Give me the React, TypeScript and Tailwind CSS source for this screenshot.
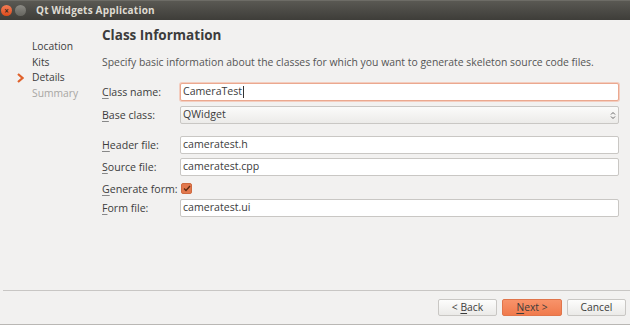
import React from "react";

const font = { fontFamily: '"Open Sans", "DejaVu Sans", sans-serif' };

function Label({ u, rest }: { u: string; rest: string }) {
  return (
    <div className="w-[78px] shrink-0 whitespace-nowrap text-[10.6px] text-[#3c3c3c] leading-none">
      <span className="underline decoration-[#888] underline-offset-2">{u}</span>
      {rest}
    </div>
  );
}

function Field({ value, focused }: { value: string; focused?: boolean }) {
  return (
    <div
      className={
        "flex-1 min-w-0 h-[18px] rounded-[2px] bg-white flex items-center px-[2px] text-[10.6px] text-[#3c3c3c] " +
        (focused ? "border border-[#eba88f] shadow-[0_0_0_1px_#f3cdbf]" : "border border-[#c9c7c4]")
      }
    >
      {value}
      {focused && <span className="w-px h-[12px] bg-[#333] ml-px" />}
    </div>
  );
}

export default function App() {
  return (
    <div className="w-[630px] h-[325px] bg-[#f2f1f0] flex flex-col overflow-hidden" style={font}>
      {/* title bar */}
      <div className="h-[20px] shrink-0 bg-gradient-to-b from-[#5a5953] to-[#3e3d39] border-t border-[#6d6c66] flex items-center">
        <div className="w-[11px] h-[11px] rounded-full bg-gradient-to-b from-[#f37d55] to-[#df4a16] ml-[1px] flex items-center justify-center">
          <span className="text-[8px] leading-none text-[#3c2a20] font-bold">×</span>
        </div>
        <div className="w-[11px] h-[11px] rounded-full bg-gradient-to-b from-[#8c8b85] to-[#66655f] ml-[3px]" />
        <div className="ml-[10px] text-[10px] font-bold text-[#dfdbd2] tracking-[0.2px]">Qt Widgets Application</div>
      </div>

      <div className="flex flex-1 min-h-0">
        {/* sidebar */}
        <div className="w-[102px] shrink-0 pt-[19px] text-[10.3px] text-[#3c3c3c]">
          <div className="h-[16px] flex items-center pl-[32px]">Location</div>
          <div className="h-[15px] flex items-center pl-[32px]">Kits</div>
          <div className="h-[16px] flex items-center relative pl-[32px]">
            <svg className="absolute left-[17px] top-[3px]" width="7" height="10" viewBox="0 0 7 10">
              <path d="M1 1 L5.5 5 L1 9" stroke="#e0622c" strokeWidth="2.2" fill="none" />
            </svg>
            Details
          </div>
          <div className="h-[15px] flex items-center pl-[32px] text-[#a8a6a3]">Summary</div>
        </div>

        {/* main */}
        <div className="w-[517px] shrink-0 pt-[6px]">
          <div className="text-[13.5px] font-bold text-[#3c3c3c] leading-none h-[20px] flex items-center">Class Information</div>
          <div className="mt-[11px] text-[10.4px] text-[#555] leading-none whitespace-nowrap">
            Specify basic information about the classes for which you want to generate skeleton source code files.
          </div>

          <div className="mt-[16px] flex items-center">
            <Label u="C" rest="lass name:" />
            <Field value="CameraTest" focused />
          </div>
          <div className="mt-[5px] flex items-center">
            <Label u="B" rest="ase class:" />
            <div className="flex-1 min-w-0 h-[18px] rounded-[2px] border border-[#c9c7c4] bg-gradient-to-b from-[#fbfbfa] to-[#ecebe9] flex items-center px-[2px] text-[10.6px] text-[#3c3c3c]">
              <span className="flex-1">QWidget</span>
              <svg width="6" height="9" viewBox="0 0 6 9">
                <path d="M1 3.5 L3 1.5 L5 3.5" stroke="#666" strokeWidth="1" fill="none" />
                <path d="M1 5.5 L3 7.5 L5 5.5" stroke="#666" strokeWidth="1" fill="none" />
              </svg>
            </div>
          </div>
          <div className="mt-[12px] flex items-center">
            <Label u="H" rest="eader file:" />
            <Field value="cameratest.h" />
          </div>
          <div className="mt-[4px] flex items-center">
            <Label u="S" rest="ource file:" />
            <Field value="cameratest.cpp" />
          </div>
          <div className="mt-[7px] flex items-center h-[11px]">
            <Label u="G" rest="enerate form:" />
            <div className="w-[11px] h-[11px] ml-[1px] rounded-[2px] bg-[#e2784d] border border-[#cf6a40] flex items-center justify-center">
              <svg width="8" height="7" viewBox="0 0 8 7">
                <path d="M1 3.5 L3 5.5 L7 1" stroke="#5a2a12" strokeWidth="1.3" fill="none" />
              </svg>
            </div>
          </div>
          <div className="mt-[5px] flex items-center">
            <Label u="F" rest="orm file:" />
            <Field value="cameratest.ui" />
          </div>
        </div>
      </div>

      {/* bottom */}
      <div className="h-px bg-[#c8c6c4] ml-[3px] shrink-0" />
      <div className="h-[33px] shrink-0 flex items-center justify-end pr-[4px] gap-[5px]">
        <button className="w-[59px] h-[17px] rounded-[2px] border border-[#c9c7c4] bg-gradient-to-b from-[#fdfdfc] to-[#ebeae8] text-[10.3px] text-[#3c3c3c] leading-none">
          &lt; <span className="underline underline-offset-2">B</span>ack
        </button>
        <button className="w-[60px] h-[17px] rounded-[2px] border border-[#e0754b] bg-gradient-to-b from-[#f8936a] to-[#f07a4c] text-[10.3px] text-[#3c3c3c] leading-none">
          <span className="underline underline-offset-2">N</span>ext &gt;
        </button>
        <button className="w-[59px] h-[17px] rounded-[2px] border border-[#c9c7c4] bg-gradient-to-b from-[#fdfdfc] to-[#ebeae8] text-[10.3px] text-[#3c3c3c] leading-none">
          Cancel
        </button>
      </div>
      <div className="h-px bg-[#b9b7b4] shrink-0" />
    </div>
  );
}
